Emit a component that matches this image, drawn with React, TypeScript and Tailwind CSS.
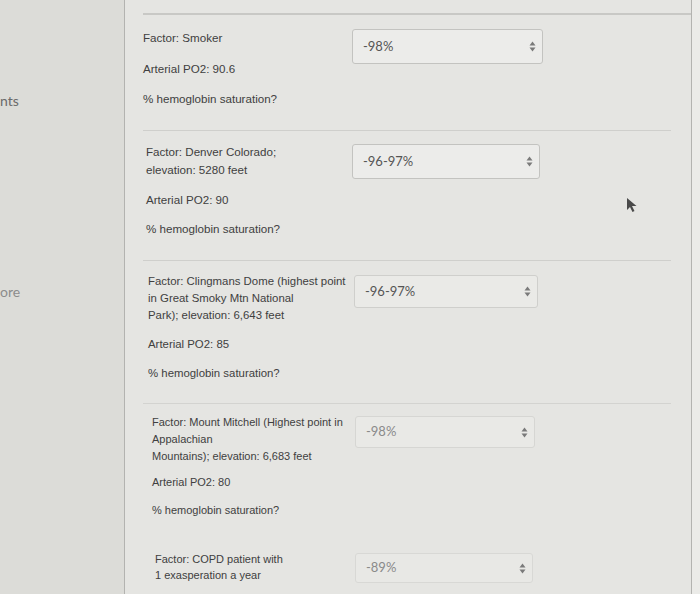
import React from 'react';

interface Item {
  factor: string[];
  po2: string;
  answer: string;
  // per-row spacing, taken from the screenshot
  wrap: string;
  grid: string;
  text: string;
  lead: string;
  gap1: string;
  gap2: string;
  select: string;
}

const items: Item[] = [
  {
    factor: ['Factor: Smoker'],
    po2: '90.6',
    answer: '-98%',
    wrap: 'pt-[14px] pb-[22px] border-b border-[#cfcfcc]',
    grid: 'grid-cols-[209px_191px] pl-0',
    text: 'text-[11.6px]',
    lead: 'leading-[18px]',
    gap1: 'mt-[13px]',
    gap2: 'mt-[12px]',
    select: 'mt-0 h-[35px] bg-[#ececea] border-[#c3c3c0]',
  },
  {
    factor: ['Factor: Denver Colorado;', 'elevation: 5280 feet'],
    po2: '90',
    answer: '-96-97%',
    wrap: 'pt-[12px] pb-[22px] border-b border-[#cfcfcc]',
    grid: 'grid-cols-[206px_188px] pl-[3px]',
    text: 'text-[11.6px]',
    lead: 'leading-[18px]',
    gap1: 'mt-[12px]',
    gap2: 'mt-[11px]',
    select: 'mt-[1px] h-[35px] bg-[#ececea] border-[#c3c3c0]',
  },
  {
    factor: ['Factor: Clingmans Dome (highest point', 'in Great Smoky Mtn National', 'Park); elevation: 6,643 feet'],
    po2: '85',
    answer: '-96-97%',
    wrap: 'pt-[12px] pb-[21px] border-b border-[#d3d3d0]',
    grid: 'grid-cols-[206px_184px] pl-[5px]',
    text: 'text-[11.4px]',
    lead: 'leading-[17px]',
    gap1: 'mt-[11px]',
    gap2: 'mt-[11px]',
    select: 'mt-[2px] h-[33px] bg-[#eaeae7] border-[#cfcfcc]',
  },
  {
    factor: ['Factor: Mount Mitchell (Highest point in', 'Appalachian', 'Mountains); elevation: 6,683 feet'],
    po2: '80',
    answer: '-98%',
    wrap: 'pt-[10px] pb-[32px]',
    grid: 'grid-cols-[203px_180px] pl-[9px]',
    text: 'text-[11px]',
    lead: 'leading-[17px]',
    gap1: 'mt-[8px]',
    gap2: 'mt-[10px]',
    select: 'mt-[2px] h-[32px] bg-[#e9e9e6] border-[#d6d6d3]',
  },
  {
    factor: ['Factor: COPD patient with', '1 exasperation a year'],
    po2: '',
    answer: '-89%',
    wrap: 'pt-0',
    grid: 'grid-cols-[200px_178px] pl-[12px]',
    text: 'text-[11px]',
    lead: 'leading-[16px]',
    gap1: '',
    gap2: '',
    select: 'mt-[2px] h-[30px] bg-[#e8e8e5] border-[#d8d8d5]',
  },
];

function Arrows() {
  return (
    <svg width="7" height="11" viewBox="0 0 7 11" className="shrink-0">
      <path d="M3.5 0.5 L6.5 4.5 L0.5 4.5 Z" fill="#7a7a7a" />
      <path d="M3.5 10.5 L6.5 6.5 L0.5 6.5 Z" fill="#7a7a7a" />
    </svg>
  );
}

function Row({ item, index }: { item: Item; index: number }) {
  return (
    <div className={item.wrap}>
      <div className={'grid items-start ' + item.grid}>
        <div
          className={'text-[#404040] whitespace-nowrap ' + item.text}
          style={{ fontFamily: '"Liberation Sans", Arial, sans-serif' }}
        >
          <p className={item.lead}>
            {item.factor.map((l, i) => (
              <React.Fragment key={i}>
                {l}
                {i < item.factor.length - 1 && <br />}
              </React.Fragment>
            ))}
          </p>
          {item.po2 && (
            <>
              <p className={'leading-[18px] ' + item.gap1}>Arterial PO2: {item.po2}</p>
              <p className={'leading-[18px] ' + item.gap2}>% hemoglobin saturation?</p>
            </>
          )}
        </div>
        <div
          className={
            'flex items-center justify-between rounded-[3px] border pl-[10px] pr-[6px] ' + item.select
          }
        >
          <span
            className={'text-[13px] ' + (index < 3 ? 'text-[#555]' : 'text-[#8a8a8a]')}
            style={{ fontFamily: 'Lato, "Open Sans", sans-serif' }}
          >
            {item.answer}
          </span>
          <Arrows />
        </div>
      </div>
    </div>
  );
}

export default function App() {
  return (
    <div className="relative flex h-[594px] w-[700px] overflow-hidden bg-[#e5e5e2]">
      <div
        className="flex w-[124px] shrink-0 flex-col bg-[#dcdcd8]"
        style={{ fontFamily: 'Lato, "Open Sans", sans-serif' }}
      >
        <span className="mt-[92px] text-[14px] text-[#6a6a6a] leading-[18px]">nts</span>
        <span className="mt-[173px] text-[14px] text-[#8c8c8c] leading-[18px]">ore</span>
      </div>
      <div className="flex flex-1 border-l border-r border-[#b3b3b0] pt-[13px] pl-[18px]">
        <div className="flex-1 border-t-2 border-[#c8c8c5]">
          <div className="mr-[20px]">
            {items.map((it, i) => (
              <Row key={i} item={it} index={i} />
            ))}
          </div>
        </div>
      </div>
      <div className="w-[8px] shrink-0 bg-[#ebebe8]" />
      <svg className="absolute left-[626px] top-[197px]" width="12" height="16" viewBox="0 0 12 16">
        <path d="M1 1 L1 13 L4 10 L6.5 15 L8.5 14 L6 9 L10.5 9 Z" fill="#4a4a4a" />
      </svg>
    </div>
  );
}
